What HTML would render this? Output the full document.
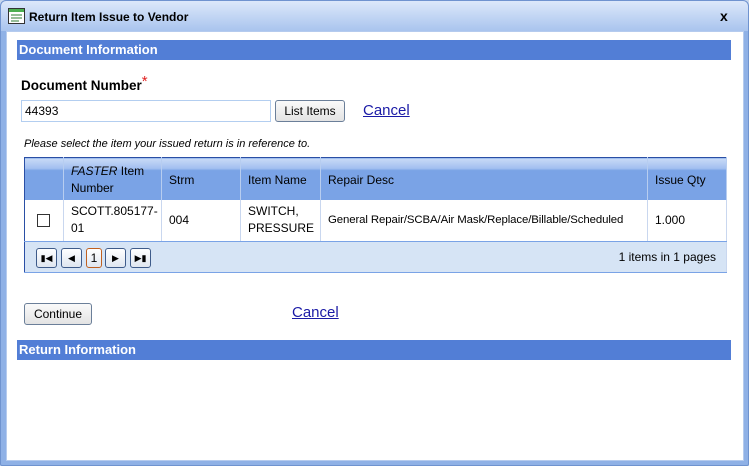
<!DOCTYPE html>
<html><head><style>
*{box-sizing:border-box;margin:0;padding:0}
body{width:749px;height:466px;overflow:hidden;font-family:"Liberation Sans",sans-serif;font-size:12px;color:#000;background:#c8d8ee;position:relative}
.win{position:absolute;left:0;top:0;width:749px;height:466px;border:1px solid #6f93cf;border-radius:6px 6px 2px 2px;background:linear-gradient(#dce8fa,#a9c4ee 30px,#8fb1e6 30px,#8fb1e6);}
.title{position:absolute;left:28px;top:9px;font-size:12px;font-weight:bold;color:#000}
.x{position:absolute;left:719px;top:7px;font-weight:bold;font-size:14px}
.content{position:absolute;left:5px;top:30px;width:738px;height:430px;background:#fff;border:1px solid #b5cbee}
.bar{position:absolute;left:17px;width:714px;height:20px;background:#527ed6;color:#fff;font-weight:bold;font-size:13px;padding:2px 2px;}
.a{position:absolute}
a{color:#1a1aa6;text-decoration:underline;font-size:15px}
.btn{position:absolute;border:1px solid #6b7f99;border-radius:3px;background:linear-gradient(#fafafa,#e3e3e3);font-size:12px;text-align:center;line-height:20px}
table{position:absolute;left:24px;top:157px;width:702px;border-collapse:collapse;border:1px solid #2a4fa5;table-layout:fixed;font-size:12px;line-height:17px}
th{background:linear-gradient(#c9dbf6,#a2bff0 10px,#7aa3e6 12px,#7aa3e6);font-weight:normal;text-align:left;padding:5px 7px 3px;height:42px;border-right:1px solid #b7cdf0;vertical-align:middle}
td{padding:3px 7px;height:41px;border-right:1px solid #c9d7ef;border-bottom:1px solid #7aa3e6}
.pager{height:31px;background:#d6e4f5;padding:0}
.pb{position:absolute;top:248px;width:21px;height:20px;border:1px solid #3e5b8a;border-radius:3px;background:linear-gradient(#fff,#dfe6f0);font-size:9px;text-align:center;line-height:18px}
</style></head><body>
<div class="win">
<svg class="a" style="left:7px;top:7px" width="17" height="16" viewBox="0 0 17 16"><rect x="0.5" y="0.5" width="16" height="15" fill="#fff" stroke="#333"/><rect x="1" y="1" width="15" height="3" fill="#4caf50"/><path d="M3 7h11M3 10h11M3 13h8" stroke="#2e7d32"/></svg>
<div class="title">Return Item Issue to Vendor</div>
<div class="x">x</div>
<div class="content"></div>
</div>
<div class="bar" style="top:40px">Document Information</div>
<div class="a" style="left:21px;top:77px;font-weight:bold;font-size:13.5px">Document Number<span style="color:#e02020;font-weight:normal;font-size:15px;position:relative;top:-4px">*</span></div>
<div class="a" style="left:21px;top:100px;width:250px;height:22px;border:1px solid #b3cef0;padding:3px 3px;font-size:12px">44393</div>
<div class="btn" style="left:275px;top:100px;width:70px;height:22px">List Items</div>
<a class="a" style="left:363px;top:102px">Cancel</a>
<div class="a" style="left:24px;top:138px;font-style:italic;font-size:11px">Please select the item your issued return is in reference to.</div>
<table>
<colgroup><col style="width:39px"><col style="width:98px"><col style="width:79px"><col style="width:80px"><col style="width:327px"><col style="width:79px"></colgroup>
<tr><th></th><th><i>FASTER</i> Item Number</th><th>Strm</th><th>Item Name</th><th>Repair Desc</th><th>Issue Qty</th></tr>
<tr><td><div style="width:13px;height:13px;border:1px solid #333;margin-left:5px"></div></td><td>SCOTT.805177-01</td><td>004</td><td>SWITCH, PRESSURE</td><td style="white-space:nowrap;font-size:11.4px;letter-spacing:-0.1px">General Repair/SCBA/Air Mask/Replace/Billable/Scheduled</td><td>1.000</td></tr>
<tr><td colspan="6" class="pager" style="text-align:right;padding:2px 10px 0 0;vertical-align:middle">1 items in 1 pages</td></tr>
</table>
<div class="pb" style="left:36px">&#9646;&#9664;</div>
<div class="pb" style="left:61px">&#9664;</div>
<div class="pb" style="left:86px;width:16px;border-color:#c06020;font-size:12px">1</div>
<div class="pb" style="left:105px">&#9654;</div>
<div class="pb" style="left:130px">&#9654;&#9646;</div>
<div class="btn" style="left:24px;top:303px;width:68px;height:22px">Continue</div>
<a class="a" style="left:292px;top:304px">Cancel</a>
<div class="bar" style="top:340px">Return Information</div>
</body></html>
